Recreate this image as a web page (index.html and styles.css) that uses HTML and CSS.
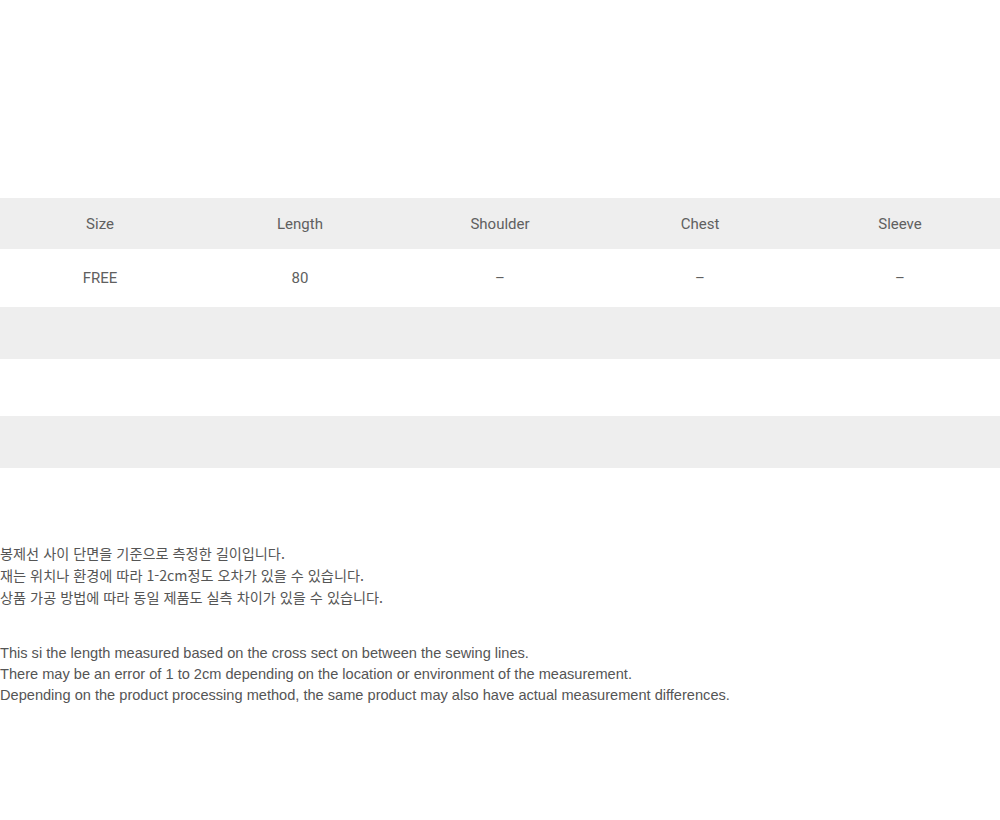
FILE: index.html
```html
<!DOCTYPE html>
<html lang="ko">
<head>
<meta charset="utf-8">
<link rel="stylesheet" href="styles.css">
</head>
<body>
<div class="page">
  <div class="size-table">
    <div class="row row-head">
      <div class="cell">Size</div>
      <div class="cell">Length</div>
      <div class="cell">Shoulder</div>
      <div class="cell">Chest</div>
      <div class="cell">Sleeve</div>
    </div>
    <div class="row row-data">
      <div class="cell">FREE</div>
      <div class="cell">80</div>
      <div class="cell">–</div>
      <div class="cell">–</div>
      <div class="cell">–</div>
    </div>
    <div class="row row-gray"></div>
    <div class="row row-white"></div>
    <div class="row row-gray"></div>
  </div>
  <div class="notes">
    <p class="ko">봉제선 사이 단면을 기준으로 측정한 길이입니다.<br>재는 위치나 환경에 따라 1-2cm정도 오차가 있을 수 있습니다.<br>상품 가공 방법에 따라 동일 제품도 실측 차이가 있을 수 있습니다.</p>
    <p class="en">This si the length measured based on the cross sect on between the sewing lines.<br>There may be an error of 1 to 2cm depending on the location or environment of the measurement.<br>Depending on the product processing method, the same product may also have actual measurement differences.</p>
  </div>
</div>
</body>
</html>
```
FILE: styles.css
```css
html, body {
  margin: 0;
  padding: 0;
  background: #ffffff;
}
.page {
  width: 1000px;
  padding-top: 198px;
  font-family: "Liberation Sans", "Noto Sans CJK KR", sans-serif;
  color: #555555;
}
.size-table {
  display: flex;
  flex-direction: column;
}
.row {
  display: grid;
  grid-template-columns: repeat(5, 1fr);
  align-items: center;
}
.row-head {
  height: 51px;
  background: #eeeeee;
}
.row-data {
  height: 58px;
  background: #ffffff;
}
.row-gray {
  height: 52px;
  background: #eeeeee;
}
.row-white {
  height: 57px;
  background: #ffffff;
}
.cell {
  text-align: center;
  font-family: "Liberation Sans Narrow", "Roboto", sans-serif;
  font-size: 15px;
  color: #606060;
}
.notes {
  padding-top: 74px;
}
.notes p {
  margin: 0;
}
.ko {
  font-family: "Noto Sans CJK KR", sans-serif;
  font-size: 14.2px;
  line-height: 22px;
}
.en {
  margin-top: 35px !important;
  font-size: 14.6px;
  line-height: 21px;
}
```
